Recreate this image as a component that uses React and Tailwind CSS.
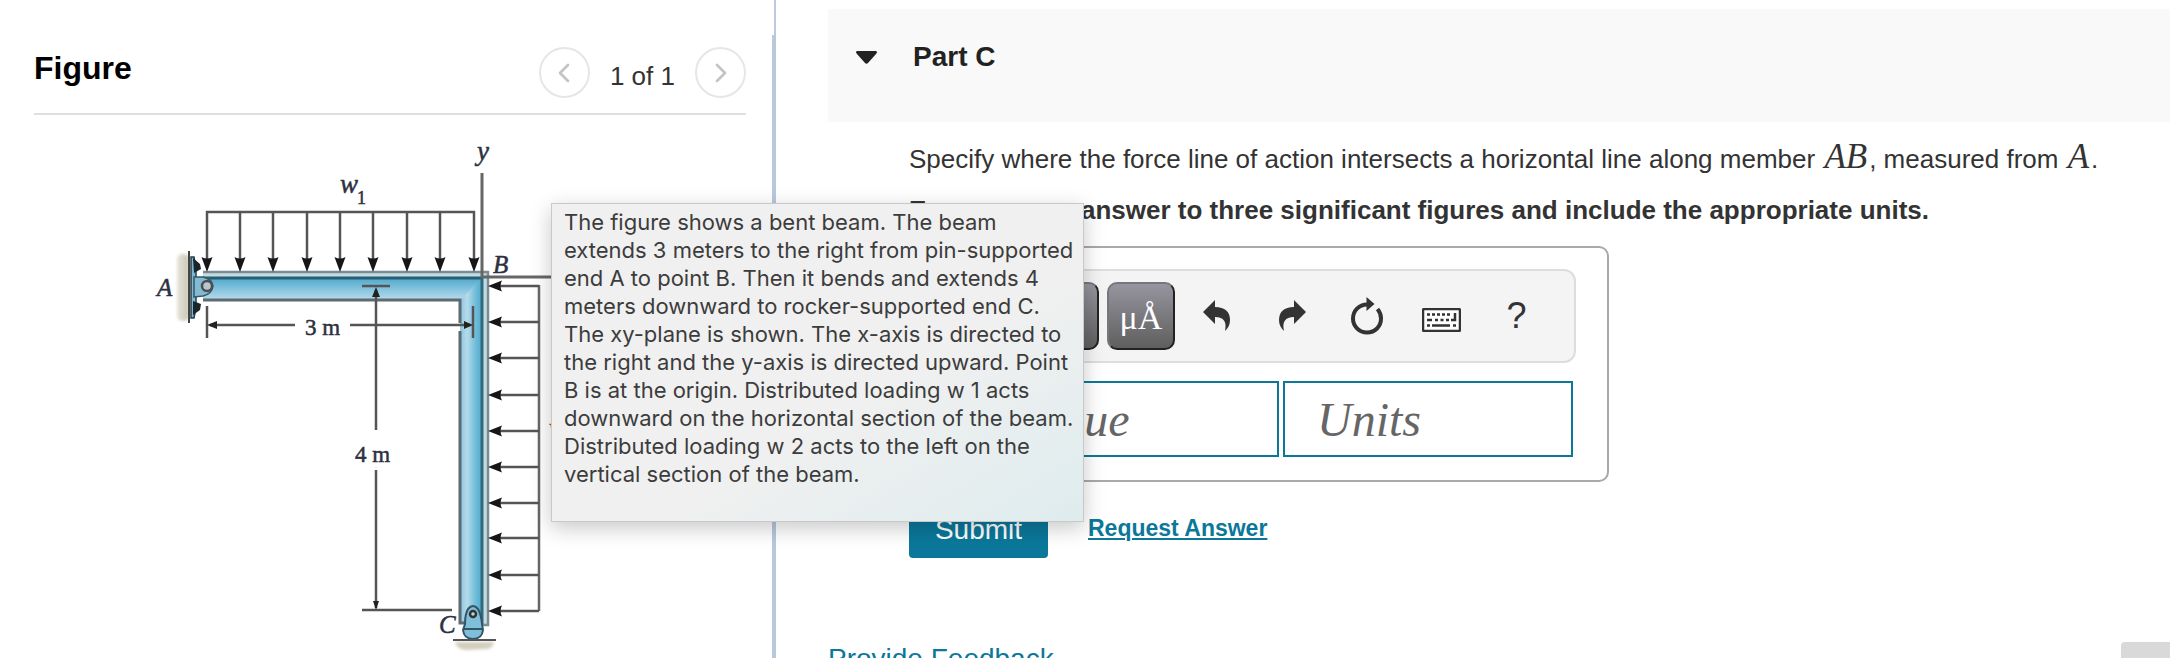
import React, { useState } from 'react';
import { ChevronLeft, ChevronRight } from 'lucide-react';

const DESCRIPTION = [
  'The figure shows a bent beam. The beam',
  'extends 3 meters to the right from pin-supported',
  'end A to point B. Then it bends and extends 4',
  'meters downward to rocker-supported end C.',
  'The xy-plane is shown. The x-axis is directed to',
  'the right and the y-axis is directed upward. Point',
  'B is at the origin. Distributed loading w 1 acts',
  'downward on the horizontal section of the beam.',
  'Distributed loading w 2 acts to the left on the',
  'vertical section of the beam.',
];

const W1_ARROWS = [207, 240, 273, 307, 340, 373, 407, 440, 474];
const W2_ARROWS = [286, 322, 358, 395, 431, 467, 503, 538, 575, 611];

function BeamFigure() {
  return (
    <svg viewBox="140 130 440 528" className="block w-[440px] h-[528px]" role="img" aria-label="Bent beam ABC">
      <defs>
        <linearGradient id="beamH" x1="0" y1="0" x2="0" y2="1">
          <stop offset="0" stopColor="#4fa9cb" />
          <stop offset="0.5" stopColor="#84c3de" />
          <stop offset="1" stopColor="#b9dcec" />
        </linearGradient>
        <linearGradient id="beamV" x1="0" y1="0" x2="1" y2="0">
          <stop offset="0" stopColor="#8cc5de" />
          <stop offset="0.32" stopColor="#b5dbeb" />
          <stop offset="0.7" stopColor="#72bdd9" />
          <stop offset="1" stopColor="#4fa9cb" />
        </linearGradient>
        <linearGradient id="wall" x1="0" y1="0" x2="1" y2="0">
          <stop offset="0" stopColor="#e6e4da" />
          <stop offset="1" stopColor="#c9c6b6" />
        </linearGradient>
        <filter id="soft" x="-30%" y="-30%" width="160%" height="160%">
          <feGaussianBlur stdDeviation="1.5" />
        </filter>
      </defs>

      {/* Wall and pin support at A */}
      <rect x="177" y="254" width="12" height="67" rx="5" fill="url(#wall)" filter="url(#soft)" />
      <path d="M191 257h3l2 12v38l-2 11h-3z" fill="#79b9d6" stroke="#263d49" strokeWidth="1.5" />
      <path d="M193 258l7 6 1 5-7 4zM193 301l8 3-1 6-7 5z" fill="#1c2529" />
      <path d="M189 251v72" stroke="#444" strokeWidth="2" />

      {/* Beam */}
      <path d="M203 272h285v353h-6V278H203z" fill="#c2dce2" />
      <rect x="203" y="278" width="279" height="22" fill="url(#beamH)" />
      <path d="M460 300L482 278V624H460z" fill="url(#beamV)" />
      <path d="M203 272h285v353h-5" fill="none" stroke="#7b8d92" strokeWidth="2.5" />
      <path d="M203 278h279" stroke="#285e75" strokeWidth="3" />
      <path d="M203 300h257v23m0 8v292h4" fill="none" stroke="#5d6a70" strokeWidth="3" />
      <path d="M482 278v346" stroke="#31697f" strokeWidth="3" />
      <path d="M194 277h9q9 2 10 9-1 8-10 10l-9 1z" fill="#82bad2" stroke="#395563" strokeWidth="1.5" />
      <circle cx="207" cy="286" r="5" fill="#b8c5cb" stroke="#4b5053" strokeWidth="2.5" />

      {/* Axes */}
      <path d="M482 173v105M482 277h98" stroke="#666" strokeWidth="3" />

      {/* Distributed load w1 */}
      <path d="M206 212h269" stroke="#555" strokeWidth="2.5" />
      {W1_ARROWS.map((x) => (
        <g key={x}>
          <path d={`M${x} 211v50`} stroke="#555" strokeWidth="2.5" />
          <path d={`M${x - 5.5} 257q5.500 3 11 0l-5.500 15z`} fill="#161616" />
        </g>
      ))}

      {/* Distributed load w2 */}
      <path d="M539 285v326" stroke="#666" strokeWidth="2.5" />
      {W2_ARROWS.map((y) => (
        <g key={y}>
          <path d={`M499 ${y}h40`} stroke="#555" strokeWidth="2.5" />
          <path d={`M502 ${y - 5.5}q-3 5.500 0 11l-14-5.500z`} fill="#161616" />
        </g>
      ))}

      {/* Dimensions */}
      <g stroke="#555" strokeWidth="2.5">
        <path d="M207 306v32M473 306v32M210 325h85M350 325h120" />
        <path d="M362 286h28M376 290v140M376 470v138M362 610h90" />
      </g>
      <path d="M207 325l10-4v8zM473 325l-9-4v8zM376 287l-4 10h8zM376 610l-3-9h6z" fill="#222" />

      {/* Rocker support at C */}
      <path d="M455 642q2 8 12 8l20-1q6-1 7-7z" fill="#d2cfbf" filter="url(#soft)" />
      <path d="M465 624q0-10 3-15 5-6 10 0 3 5 4 15l1 6q-1 9-10 9t-10-9z" fill="#7fbfda" stroke="#315466" strokeWidth="2" />
      <path d="M463 629h20" stroke="#315466" strokeWidth="2" />
      <circle cx="473" cy="614" r="3" fill="#c9d3d6" stroke="#333" strokeWidth="2.5" />
      <path d="M453 640h43" stroke="#555" strokeWidth="2" />

      <g fill="#2c3040" fontFamily="Liberation Serif, serif" fontSize="25" stroke="#2c3040" strokeWidth="0.5">
        <g fontStyle="italic">
          <text x="477" y="160" fontSize="27">y</text>
          <text x="340" y="193" fontSize="27">w</text>
          <text x="157" y="296">A</text>
          <text x="493" y="273">B</text>
          <text x="439" y="633">C</text>
          <text x="549" y="436" fill="#8a4a3a" stroke="#8a4a3a">w</text>
        </g>
        <text x="357" y="204" fontSize="18">1</text>
        <text x="305" y="335" fontSize="23">3 m</text>
        <text x="355" y="462" fontSize="23">4 m</text>
      </g>
    </svg>
  );
}

function UndoIcon({ className }) {
  return (
    <svg viewBox="0 0 28 32" fill="#333" className={className} aria-hidden="true">
      <path d="M12 0v7c10 0 15 5 15 13 0 5-2 8-5 11 2-9-1-14-10-14v7L0 12z" />
    </svg>
  );
}

function ResetIcon() {
  return (
    <svg viewBox="0 0 32 38" fill="none" className="w-8 h-[38px]" aria-hidden="true">
      <path d="M16 7.500C8 7.500 2 14 2 21.500S8 35.500 16 35.500s14-6 14-14c0-4-1-6.500-3.500-9.500" stroke="#333" strokeWidth="4" />
      <path d="M15.500 0l8 7-8 7z" fill="#333" />
    </svg>
  );
}

function KeyboardIcon() {
  return (
    <svg viewBox="0 0 39 24" className="w-[39px] h-6" aria-hidden="true">
      <rect x="1" y="1" width="37" height="22" rx="1.500" fill="#fff" stroke="#333" strokeWidth="2.500" />
      <g stroke="#333" strokeWidth="2.500" fill="none">
        <path d="M5 6.500h23" strokeDasharray="3 2" />
        <path d="M5 12h5M13 12h3M18.500 12h3M24 12h3" />
        <path d="M5 17.500h3M10 17.500h18M31 17.500h3M33 5v7h-4" />
      </g>
    </svg>
  );
}

function ToolButton({ label, children }) {
  return (
    <button type="button" aria-label={label} className="w-[75px] h-[68px] flex items-center justify-center">
      {children}
    </button>
  );
}

const unitKey =
  'size-[68px] rounded-[10px] border-2 border-t-[#77777b] border-l-[#77777b] border-r-[#222] border-b-[#222] bg-linear-to-b from-[#97959f] to-[#5f5f5f] text-white flex items-center justify-center';

const answerInput =
  "w-[290px] h-[76px] border-2 border-[#0b7899] bg-white px-8 font-['Liberation_Serif',serif] italic text-[48px] text-[#333] placeholder:text-[#666] placeholder:opacity-100 outline-none";

export default function App() {
  const [value, setValue] = useState('');
  const [units, setUnits] = useState('');

  return (
    <div className="h-screen overflow-hidden grid grid-cols-[772px_4px_1fr] bg-white text-[#333] font-['Liberation_Sans',Arial,sans-serif]">
      {/* Figure panel */}
      <aside className="pl-[34px] pr-[26px]">
        <header className="flex items-start justify-between pt-[47px] h-[115px] border-b-2 border-[#dedfdf]">
          <h2 className="text-[32px] leading-[42px] font-bold text-black">Figure</h2>
          <nav className="flex items-center gap-5">
            <button type="button" aria-label="Previous figure" className="size-[51px] rounded-full border-2 border-[#e6e6e6] flex items-center justify-center">
              <ChevronLeft className="size-8 text-[#c4c4c4]" />
            </button>
            <span className="pt-1.5 text-[26px] leading-8">1 of 1</span>
            <button type="button" aria-label="Next figure" className="size-[51px] rounded-full border-2 border-[#e6e6e6] flex items-center justify-center">
              <ChevronRight className="size-8 text-[#c4c4c4]" />
            </button>
          </nav>
        </header>

        <div className="relative mt-[15px] ml-[106px]">
          <BeamFigure />
          <div
            role="tooltip"
            className="absolute z-10 left-[411px] top-[73px] w-[533px] h-[319px] pl-3 pt-1 border border-[#c9c9c9] bg-linear-to-br from-[#f0f0f0] from-60% to-[#deecee] shadow-[0_6px_20px_rgba(0,0,0,0.22)] font-['Inter',sans-serif] text-[22px] leading-7 text-[#3c3c3c] whitespace-nowrap"
          >
            {DESCRIPTION.map((line) => (
              <p key={line}>{line}</p>
            ))}
          </div>
        </div>
      </aside>

      <div className="flex flex-col items-end">
        <div className="w-[2px] h-[35px] bg-[#bdc9de]" />
        <div className="w-1 flex-1 bg-[#b9c8dd]" />
      </div>

      {/* Question panel */}
      <main className="pl-[52px] pt-[9px]">
        <header className="h-[113px] bg-[#f9f9f9] pl-7 pt-7">
          <button type="button" aria-expanded="true" className="flex items-center gap-9 text-[28px] leading-10 font-bold text-[#222]">
            <svg viewBox="0 0 21 13" className="w-[21px] h-[13px]" fill="#222" aria-hidden="true">
              <path d="M1 0h19q2 1 0 3l-8 9q-1.500 1.500-3 0L1 3Q-1 1 1 0z" />
            </svg>
            Part C
          </button>
        </header>

        <section className="pl-[81px] pt-[17px]">
          <p className="text-[26px] leading-10">
            Specify where the force line of action intersects a horizontal line along member{' '}
            <i className="mx-0.5 font-['Liberation_Serif',serif] text-[35px] leading-none">AB</i>, measured from{' '}
            <i className="mx-0.5 font-['Liberation_Serif',serif] text-[35px] leading-none">A</i>.
          </p>
          <p className="mt-[11px] text-[26px] leading-10 font-bold">
            Express your answer to three significant figures and include the appropriate units.
          </p>

          <div className="mt-4 w-[700px] h-[236px] border-2 border-[#a9a9a9] rounded-[10px] pt-[21px] pr-[31px] flex flex-col items-end">
            <div className="w-[590px] h-[94px] rounded-xl border-2 border-[#ddd] bg-[#f4f4f4] pl-[43px] flex items-center">
              <button type="button" aria-label="Templates" className={unitKey} />
              <button type="button" aria-label="Units" className={`${unitKey} ml-2 mr-1 pt-1 font-['Liberation_Serif',serif] text-[34px] leading-none`}>
                μÅ
              </button>
              <ToolButton label="Undo">
                <UndoIcon className="w-7 h-8" />
              </ToolButton>
              <ToolButton label="Redo">
                <UndoIcon className="w-7 h-8 -scale-x-100" />
              </ToolButton>
              <ToolButton label="Reset">
                <ResetIcon />
              </ToolButton>
              <ToolButton label="Keyboard shortcuts">
                <span className="pt-2">
                  <KeyboardIcon />
                </span>
              </ToolButton>
              <ToolButton label="Help">
                <span className="text-[36px] leading-none">?</span>
              </ToolButton>
            </div>

            <div className="mt-[18px] pr-[3px] flex gap-1">
              <input aria-label="Value" placeholder="Value" value={value} onChange={(e) => setValue(e.target.value)} className={answerInput} />
              <input aria-label="Units" placeholder="Units" value={units} onChange={(e) => setUnits(e.target.value)} className={answerInput} />
            </div>
          </div>

          <div className="mt-5 flex items-center gap-10">
            <button type="submit" className="w-[139px] h-14 rounded bg-[#0b789b] text-white text-[28px]">
              Submit
            </button>
            <a href="#answer" className="pb-1 text-[23px] leading-8 font-bold text-[#0b789b] underline decoration-2 underline-offset-2">
              Request Answer
            </a>
          </div>
        </section>

        <a href="#feedback" className="mt-[81px] inline-block text-[28px] leading-10 text-[#0b789b]">
          Provide Feedback
        </a>
      </main>

      <div className="fixed right-0 bottom-0 w-[49px] h-4 rounded-tl bg-[#d9d9d9]" />
    </div>
  );
}
